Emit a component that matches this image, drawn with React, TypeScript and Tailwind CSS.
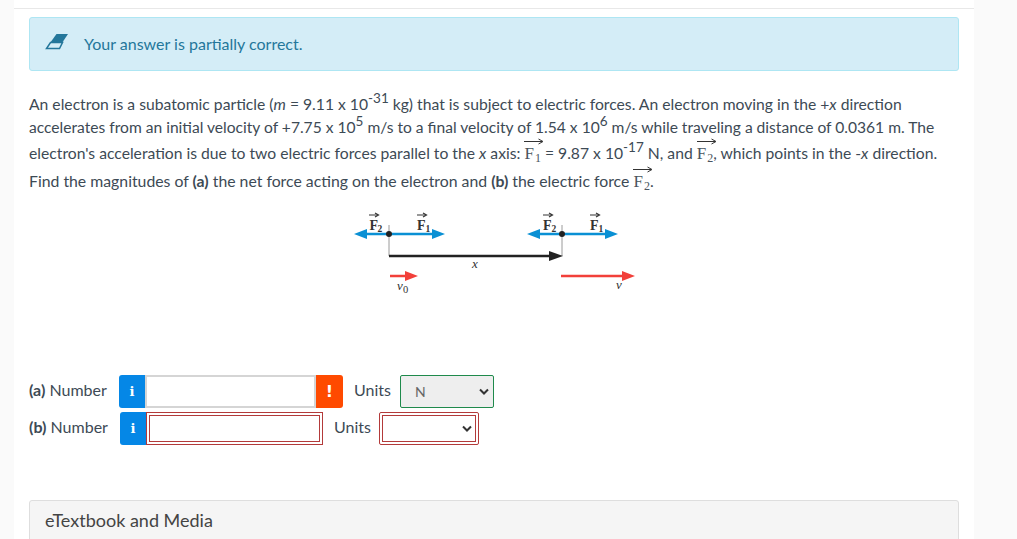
import React from 'react';

function Vec({ sub }: { sub: string }) {
  return (
    <span className="relative inline-block font-['Liberation_Serif',serif] text-[17px] text-[#4a5560]">
      <svg className="absolute left-0 top-[-5px]" width="20" height="7" viewBox="0 0 20 7">
        <path d="M0 3.5H18" stroke="#333" strokeWidth="1" />
        <path d="M14.5 1L19 3.5L14.5 6" stroke="#333" strokeWidth="1" fill="none" />
      </svg>
      F<sub className="text-[12px] align-baseline relative top-[3px] ml-[1px]">{sub}</sub>
    </span>
  );
}

function Sup({ children }: { children: React.ReactNode }) {
  return <sup className="text-[13.5px] leading-none relative top-[-1px] align-super">{children}</sup>;
}

function Info() {
  return (
    <div className="w-[26px] h-[33px] bg-[#0587e6] rounded-l-[3px] flex items-center justify-center text-white text-[13px] font-bold font-['DejaVu_Serif',serif]">
      i
    </div>
  );
}

function Chevron() {
  return (
    <svg width="10" height="7" viewBox="0 0 10 7">
      <path d="M1 1.5L5 5.5L9 1.5" stroke="#333" strokeWidth="2" fill="none" />
    </svg>
  );
}

function Diagram() {
  return (
    <svg width="295" height="95" viewBox="350 210 295 95" className="ml-[321px] mt-[18px]">
      <path d="M389 225V256M562 225V256" stroke="#9a9a9a" strokeWidth="1" />
      <path d="M362 234H436M534 234H609" stroke="#0a90d4" strokeWidth="2.5" />
      <path d="M354 234L367 229V239ZM445 234L432 229V239ZM527 234L540 229V239ZM618 234L605 229V239Z" fill="#0a90d4" />
      <path d="M389 256H552" stroke="#222" strokeWidth="2.5" />
      <path d="M563 256L549 251V261Z" fill="#222" />
      <circle cx="389" cy="234" r="3" fill="#222" />
      <circle cx="562" cy="234" r="3" fill="#222" />
      <path d="M390 276H410M561 276H626" stroke="#f2403a" strokeWidth="2.5" />
      <path d="M418 276L405 271V281ZM635 276L622 271V281Z" fill="#f2403a" />
      <g fontFamily="'Liberation Serif', serif" fill="#333">
        <text x="369.5" y="230" fontSize="14" fontWeight="700">F</text>
        <text x="377.5" y="232" fontSize="9.5" fontWeight="700">2</text>
        <text x="417" y="230" fontSize="14" fontWeight="700">F</text>
        <text x="425.5" y="232" fontSize="9.5" fontWeight="700">1</text>
        <text x="543" y="230" fontSize="14" fontWeight="700">F</text>
        <text x="551.5" y="232" fontSize="9.5" fontWeight="700">2</text>
        <text x="590" y="230" fontSize="14" fontWeight="700">F</text>
        <text x="598.5" y="232" fontSize="9.5" fontWeight="700">1</text>
        <text x="472" y="268" fontSize="13" fontStyle="italic">x</text>
        <text x="397" y="290" fontSize="13" fontStyle="italic">v</text>
        <text x="403" y="293" fontSize="10.5">0</text>
        <text x="616" y="289" fontSize="13" fontStyle="italic">v</text>
      </g>
      <path d="M369 215H378M417 215H426M543 215H552M590 215H599" stroke="#333" strokeWidth="1.2" />
      <path d="M375 213L378.5 215L375 217M423 213L426.5 215L423 217M549 213L552.5 215L549 217M596 213L599.5 215L596 217" stroke="#333" strokeWidth="1.2" fill="none" />
    </svg>
  );
}

export default function App() {
  return (
    <div className="h-[539px] overflow-hidden bg-[#fafafa] font-['Lato',sans-serif] text-[16px] text-[#3d4a55]">
      <div className="ml-[14px] w-[960px] h-full bg-white pt-[8px] px-[15px]">
        <div className="-mx-[15px] h-[1px] bg-[#e8e8e8]" />

        <div className="mt-[8px] h-[54px] bg-[#d4edf7] border border-[#aee6f3] rounded-[3px] flex items-center pl-[15px] text-[#24779b] text-[16px]">
          <svg width="24" height="17" viewBox="0 0 24 17" className="mr-[15px] -mt-[6px]">
            <path d="M11.5 1H23L17 10H5Z" fill="#24779b" />
            <path d="M5.5 9.5H17.5L14.5 15.5H1.5Z" fill="#d4edf7" stroke="#24779b" strokeWidth="1.5" />
          </svg>
          Your answer is partially correct.
        </div>

        <div className="mt-[22px] text-[15.7px] leading-[22px] whitespace-nowrap">
          <div className="h-[23px]">
            An electron is a subatomic particle (<em>m</em> = 9.11 x 10<Sup>-31</Sup> kg) that is subject to electric forces. An electron moving in the +<em>x</em> direction
          </div>
          <div className="h-[26px] text-[15.6px]">
            accelerates from an initial velocity of +7.75 x 10<Sup>5</Sup> m/s to a final velocity of 1.54 x 10<Sup>6</Sup> m/s while traveling a distance of 0.0361 m. The
          </div>
          <div className="h-[28px]">
            electron's acceleration is due to two electric forces parallel to the <em>x</em> axis: <Vec sub="1" /> = 9.87 x 10<Sup>-17</Sup> N, and <Vec sub="2" />, which points in the -<em>x</em> direction.
          </div>
          <div className="h-[22px] text-[15.8px]">
            Find the magnitudes of <b>(a)</b> the net force acting on the electron and <b>(b)</b> the electric force <Vec sub="2" />.
          </div>
        </div>

        <Diagram />

        <div className="mt-[70px] flex items-center h-[33px]">
          <span className="w-[90px] pb-[3px]"><b>(a)</b> Number</span>
          <Info />
          <div className="w-[171px] h-[33px] border-2 border-[#d5d5d5] bg-white" />
          <div className="w-[27px] h-[33px] bg-[#ff4a00] rounded-r-[3px] flex items-center justify-center text-white font-bold text-[16px] font-['DejaVu_Sans',sans-serif]">!</div>
          <span className="ml-[11px] pb-[3px]">Units</span>
          <div className="ml-[9px] w-[94px] h-[33px] border border-[#1f8a4c] rounded-[2px] bg-[#eeeeee] flex items-center justify-between pl-[14px] pr-[4px] text-[14px] text-[#666]">
            N
            <Chevron />
          </div>
        </div>

        <div className="mt-[4px] flex items-center h-[33px]">
          <span className="w-[91px] pb-[3px]"><b>(b)</b> Number</span>
          <Info />
          <div className="w-[177px] h-[33px] border border-[#b33a3a] p-[2px] bg-white">
            <div className="h-full border border-[#b33a3a]" />
          </div>
          <span className="ml-[11px] pb-[3px]">Units</span>
          <div className="ml-[8px] w-[100px] h-[33px] border border-[#b33a3a] rounded-[2px] p-[2px] bg-white">
            <div className="h-full border border-[#b33a3a] flex items-center justify-end pr-[3px]">
              <Chevron />
            </div>
          </div>
        </div>

        <div className="mt-[55px] h-[60px] bg-[#f5f5f5] border border-[#dedede] rounded-t-[3px] pl-[15px] pt-[6px] text-[18px] text-[#444]">
          eTextbook and Media
        </div>
      </div>
    </div>
  );
}
